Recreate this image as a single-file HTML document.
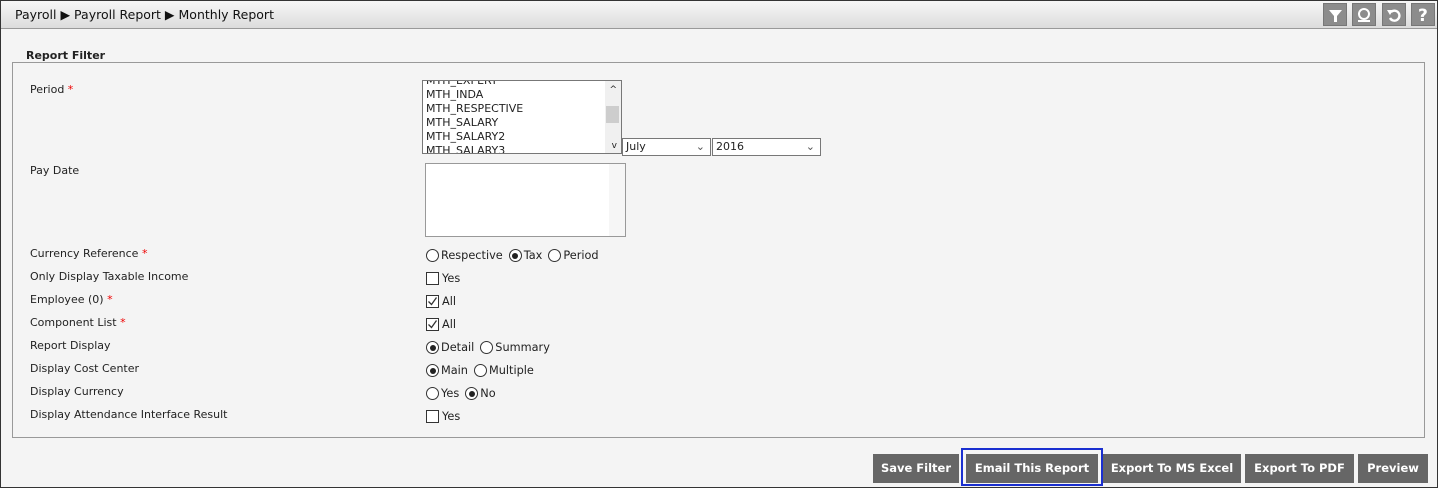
<!DOCTYPE html>
<html><head><style>
*{box-sizing:border-box;margin:0;padding:0}
body{width:1438px;height:488px;background:#f4f4f4;font-family:"DejaVu Sans",Verdana,sans-serif;font-size:11px;color:#222;position:relative;overflow:hidden}
.frame{position:absolute;left:0;top:0;width:1438px;height:488px;border:1px solid #333}
.hdr{position:absolute;left:1px;top:1px;width:1436px;height:28px;background:linear-gradient(#f6f6f6,#dcdcdc);border-bottom:1px solid #999}
.crumb{position:absolute;left:14px;top:6px;font-size:12.5px;color:#111}
.ic{position:absolute;top:3px;width:24px;height:23px;background:#8c8c8c;border:1px solid #777}
.fs{position:absolute;left:12px;top:62px;width:1413px;height:376px;border:1px solid #999}
.lg{position:absolute;left:22px;top:49px;background:#f4f4f4;padding:0 4px;font-weight:bold;font-size:11px}
.l{position:absolute;left:30px;font-size:11px}
.r{color:#e00}
.c{position:absolute;left:426px;font-size:11.3px;display:flex;align-items:center}
.rd{display:inline-block;width:13px;height:13px;border:1px solid #333;border-radius:50%;background:#fff;margin-right:2px;position:relative}
.rd.on::after{content:"";position:absolute;left:2.5px;top:2.5px;width:6px;height:6px;border-radius:50%;background:#222}
.cb{display:inline-block;width:13px;height:13px;border:1px solid #333;background:#fff;margin-right:3px;position:relative}
.sp{margin-right:6px}
.btn{position:absolute;top:454px;height:29px;background:#666;color:#fff;font-weight:bold;font-size:11.5px;text-align:center;line-height:29px}
.list{position:absolute;left:422px;top:80px;width:200px;height:74px;border:1px solid #777;background:#fff;overflow:hidden;font-size:11px}
.list div{height:14px;line-height:14px;padding-left:3px}
.sel{position:absolute;top:138px;height:18px;border:1px solid #777;background:#fff;font-size:11px;line-height:16px;padding-left:3px}
</style></head><body>
<div class="frame"></div>
<div class="hdr"><div class="crumb">Payroll ▶ Payroll Report ▶ Monthly Report</div></div>
<div class="ic" style="left:1323px"><svg width="22" height="21"><path d="M5 6h13l-5 6v6h-3v-6z" fill="#fff"/></svg></div>
<div class="ic" style="left:1352px"><svg width="22" height="21"><circle cx="11" cy="10" r="5" fill="none" stroke="#fff" stroke-width="2"/><path d="M5 17h12" stroke="#fff" stroke-width="2"/></svg></div>
<div class="ic" style="left:1382px"><svg width="22" height="21"><path d="M8 8a5 5 0 1 1-1 6" fill="none" stroke="#fff" stroke-width="2.4"/><path d="M4 6l6 0-3 5z" fill="#fff"/></svg></div>
<div class="ic" style="left:1411px"><svg width="22" height="21"><text x="6" y="17" fill="#fff" font-size="17" font-weight="bold" font-family="DejaVu Sans">?</text></svg></div>
<div class="fs"></div>
<div class="lg">Report Filter</div>
<div class="l" style="top:83px">Period <span class="r">*</span></div>
<div class="l" style="top:164px">Pay Date</div>
<div class="l" style="top:247px">Currency Reference <span class="r">*</span></div>
<div class="l" style="top:270px">Only Display Taxable Income</div>
<div class="l" style="top:293px">Employee (0) <span class="r">*</span></div>
<div class="l" style="top:316px">Component List <span class="r">*</span></div>
<div class="l" style="top:339px">Report Display</div>
<div class="l" style="top:362px">Display Cost Center</div>
<div class="l" style="top:385px">Display Currency</div>
<div class="l" style="top:408px">Display Attendance Interface Result</div>
<div class="list"><div style="margin-top:-7px">MTH_EXPERT</div><div>MTH_INDA</div><div>MTH_RESPECTIVE</div><div>MTH_SALARY</div><div>MTH_SALARY2</div><div>MTH_SALARY3</div>
<div style="position:absolute;right:0;top:0;width:16px;height:72px;background:#f0f0f0;padding:0"></div>
<div style="position:absolute;right:2px;top:25px;width:13px;height:17px;background:#cdcdcd;padding:0"></div>
<div style="position:absolute;right:4px;top:2px;font-size:9px;padding:0">^</div>
<div style="position:absolute;right:4px;top:58px;font-size:9px;padding:0">v</div></div>
<div class="sel" style="left:622px;width:89px">July<span style="position:absolute;right:5px;color:#555">⌄</span></div>
<div class="sel" style="left:712px;width:109px">2016<span style="position:absolute;right:5px;color:#555">⌄</span></div>
<div style="position:absolute;left:425px;top:163px;width:201px;height:74px;border:1px solid #999;background:#fff"><div style="position:absolute;right:0;top:0;width:16px;height:72px;background:#f6f6f6"></div></div>
<div class="c" style="top:249px"><span class="rd"></span><span class="sp">Respective</span><span class="rd on"></span><span class="sp">Tax</span><span class="rd"></span>Period</div>
<div class="c" style="top:272px"><span class="cb"></span>Yes</div>
<div class="c" style="top:295px"><span class="cb"><svg width="11" height="11" style="position:absolute;left:0;top:0"><path d="M1.5 5.5l3 3 5-7" stroke="#333" fill="none" stroke-width="1.3"/></svg></span>All</div>
<div class="c" style="top:318px"><span class="cb"><svg width="11" height="11" style="position:absolute;left:0;top:0"><path d="M1.5 5.5l3 3 5-7" stroke="#333" fill="none" stroke-width="1.3"/></svg></span>All</div>
<div class="c" style="top:341px"><span class="rd on"></span><span class="sp">Detail</span><span class="rd"></span>Summary</div>
<div class="c" style="top:364px"><span class="rd on"></span><span class="sp">Main</span><span class="rd"></span>Multiple</div>
<div class="c" style="top:387px"><span class="rd"></span><span class="sp">Yes</span><span class="rd on"></span>No</div>
<div class="c" style="top:410px"><span class="cb"></span>Yes</div>
<div class="btn" style="left:873px;width:86px">Save Filter</div>
<div style="position:absolute;left:961px;top:448px;width:142px;height:38px;border:2px solid #1a2fd0"></div>
<div class="btn" style="left:966px;width:132px">Email This Report</div>
<div class="btn" style="left:1103px;width:138px">Export To MS Excel</div>
<div class="btn" style="left:1245px;width:109px">Export To PDF</div>
<div class="btn" style="left:1358px;width:70px">Preview</div>
</body></html>
